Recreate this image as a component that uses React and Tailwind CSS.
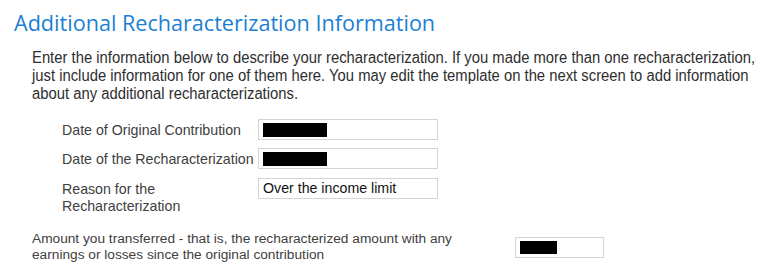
import React from "react";

function Field({ label, children, className = "" }) {
  return (
    <div className={"flex items-start " + className}>
      <div className="w-[196px] pt-[3px] text-[14.2px] leading-[17px] text-[#404040]">{label}</div>
      {children}
    </div>
  );
}

function Box({ className = "", children }) {
  return (
    <div className={"h-[21px] border border-[#d4d4d4] bg-white flex items-center px-[4px] " + className}>
      {children}
    </div>
  );
}

export default function App() {
  return (
    <div className="w-[768px] h-[278px] bg-white overflow-hidden" style={{ fontFamily: '"Liberation Sans", Arial, sans-serif' }}>
      <h1
        className="pl-[14px] pt-[9px] text-[21.6px] leading-[28px] text-[#1a7fd4] whitespace-nowrap"
        style={{ fontFamily: '"Open Sans", sans-serif' }}
      >
        Additional Recharacterization Information
      </h1>
      <div className="ml-[32px] mt-[12px] h-[56px]">
        <p className="origin-left scale-x-[0.926] whitespace-nowrap text-[16px] leading-[18px] text-[#2e2e2e]">
          Enter the information below to describe your recharacterization. If you made more than one recharacterization,
          <br />
          just include information for one of them here. You may edit the template on the next screen to add information
          <br />
          about any additional recharacterizations.
        </p>
      </div>
      <div className="ml-[62px] mt-[14px] flex flex-col gap-[8px]">
        <Field label="Date of Original Contribution">
          <Box className="w-[180px]">
            <div className="w-[64px] h-[14px] bg-black" />
          </Box>
        </Field>
        <Field label="Date of the Recharacterization">
          <Box className="w-[180px]">
            <div className="w-[64px] h-[14px] bg-black" />
          </Box>
        </Field>
        <Field className="mt-[1px]" label={<>Reason for the<br />Recharacterization</>}>
          <Box className="w-[180px] text-[14.2px] text-[#111]">Over the income limit</Box>
        </Field>
      </div>
      <div className="ml-[32px] mt-[16px] flex items-start">
        <div className="w-[483px] whitespace-nowrap text-[13.7px] leading-[16px] text-[#404040]">
          Amount you transferred - that is, the recharacterized amount with any
          <br />
          earnings or losses since the original contribution
        </div>
        <Box className="w-[89px] mt-[6px]">
          <div className="w-[37px] h-[13px] bg-black" />
        </Box>
      </div>
    </div>
  );
}
